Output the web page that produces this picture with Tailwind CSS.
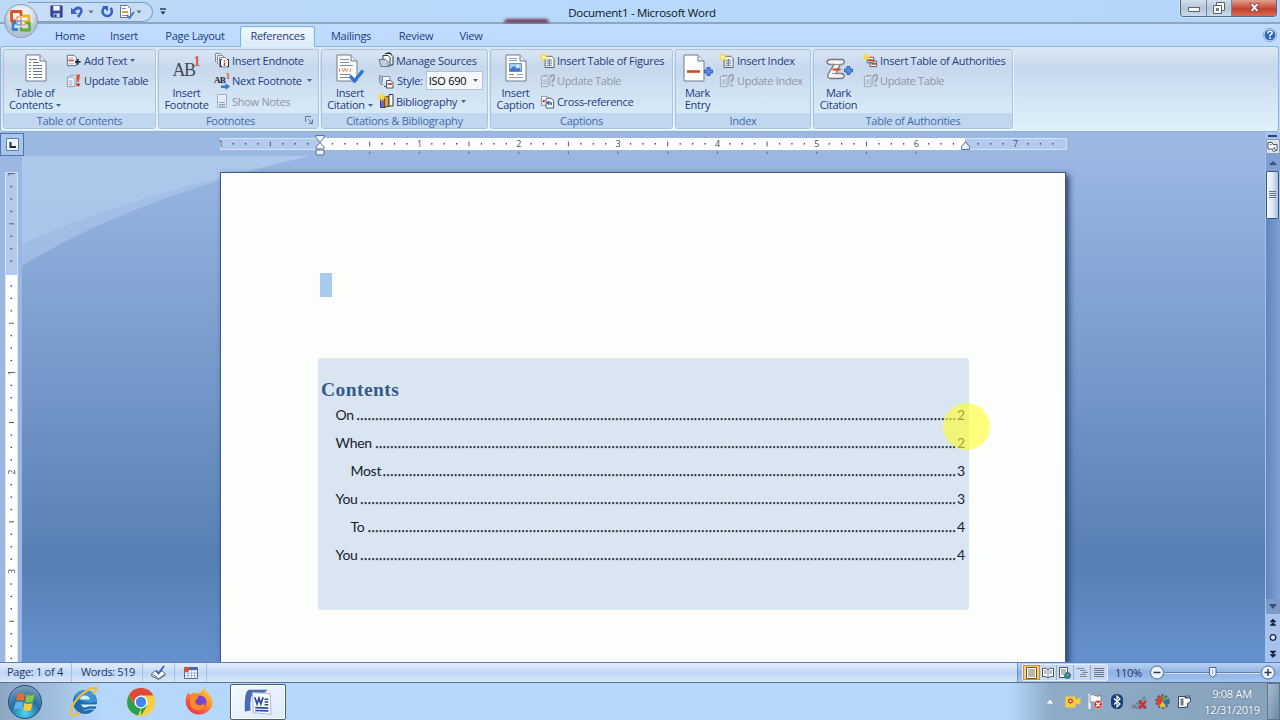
<!DOCTYPE html>
<html lang="en">
<head>
    <meta charset="UTF-8">
    <meta name="viewport" content="width=device-width, initial-scale=1.0">
    <title>Document1 - Microsoft Word</title>
    <script src="https://cdn.jsdelivr.net/npm/@tailwindcss/browser@4"></script>
    <style>
        body {
            font-family: 'Open Sans', 'Noto Sans', sans-serif;
        }
    </style>
</head>
<body class="w-[1280px] h-[720px] overflow-hidden flex flex-col text-[11px] leading-[13px] tracking-[-0.27px] text-[#1c3c80] bg-[#bfdbff]">

    <!-- Icon sprites -->
    <svg class="hidden">
        <symbol id="page" viewBox="0 0 22 28">
            <path d="M1 1h14l6 6v20H1z" fill="#fff" stroke="#707a88"/>
            <path d="M15 1v6h6" fill="#e2e8f0" stroke="#707a88"/>
        </symbol>
        <symbol id="docNew" viewBox="0 0 16 16">
            <path d="M5.500 3.500h7l2.500 2.500v9.500h-9.500z" fill="#fff" stroke="#4c5866"/>
            <path d="M7 7.500h6M7 9.500h6M7 11.500h6M7 13.500h6M10 6v8" stroke="#6c7c94"/>
            <path d="M4 0v9M-.5 4.500h9M1 1.500l6 6M7 1.500l-6 6" stroke="#f5d94a" stroke-width="1.500"/>
            <circle cx="4" cy="4.500" r="1.800" fill="#fff7b0"/>
        </symbol>
        <symbol id="docGrey" viewBox="0 0 16 16">
            <path d="M1.500 3.500h5l2 2v9h-7zM3.500 2.500h5l2 2v9" fill="#dce5f0" stroke="#95a2b3"/>
            <path d="M3 7.500h4M3 9.500h4M3 11.500h4" stroke="#9aa9bf"/>
            <path d="M11 4.500q.5-2.500 2.500-2.500T15.500 4.500Q15 7 13.500 8v2M13.500 12v2.500" fill="none" stroke="#98a3b3" stroke-width="2"/>
        </symbol>
        <symbol id="plus" viewBox="0 0 9 9">
            <path d="M3 .5h3V3h2.500v3H6v2.500H3V6H.5V3H3z" fill="#5b8be8" stroke="#2450b0" stroke-width=".8"/>
        </symbol>
    </svg>

    <!-- Title bar -->
    <header class="relative h-[24px] shrink-0 border-b-2 border-[#8ea6c0] bg-linear-to-r from-[#bcd9f7] via-[#b6d9fc] to-[#b2d5fa] flex items-center text-[#0c1420]">
        <div class="absolute left-[504px] top-[19px] w-[45px] h-[4px] rounded-t-full bg-[#6b3450] blur-[1.5px]"></div>
        <div class="ml-[28px] mt-[1px] w-[125px] h-[20px] border border-[#7d9cc4] border-l-0 rounded-r-full bg-[#c6ddf5] flex items-center pl-[22px]">
            <svg class="w-[13px] h-[13px]" viewBox="0 0 14 14">
                <path d="M1 1h12v12H2l-1-1z" fill="#3b49a8" stroke="#27317f"/>
                <path d="M3.500 1h7v5h-7z" fill="#f1f5ff"/><path d="M4 9h6.500v4H4z" fill="#c9d2ee"/><path d="M5 10h2v3H5z" fill="#27317f"/>
            </svg>
            <svg class="ml-[7px] w-[14px] h-[14px]" viewBox="0 0 14 14">
                <path d="M3 7Q6 2 9.500 3Q13 5 10 9L8 12" fill="none" stroke="#3a63c8" stroke-width="2.600"/>
                <path d="M1 2.500V9h6.500z" fill="#3a63c8"/>
            </svg>
            <svg class="ml-[4px] w-[6px] h-[4px]" viewBox="0 0 6 4"><path d="M.5.5h5L3 3.500z" fill="#5c7191"/></svg>
            <svg class="ml-[7px] w-[13px] h-[13px]" viewBox="0 0 13 13">
                <path d="M3.500 2.500A4.700 4.700 0 1 0 9.500 3" fill="none" stroke="#3560cc" stroke-width="2.500"/>
                <path d="M1 1h6v5.500z" fill="#3560cc"/>
            </svg>
            <svg class="ml-[5px] w-[16px] h-[16px]" viewBox="0 0 16 16">
                <path d="M1.500 1.500h7l3 3v9h-10z" fill="#f9fbff" stroke="#677994"/>
                <path d="M3 4.500h4M3 11.500h6" stroke="#7a90b4"/><path d="M3 8h6" stroke="#e09a50" stroke-width="2"/>
                <path d="M8 11l2.500 3L15 8" fill="none" stroke="#3d75c4" stroke-width="1.800"/>
            </svg>
            <svg class="ml-[1px] w-[6px] h-[4px]" viewBox="0 0 6 4"><path d="M.5.5h5L3 3.500z" fill="#5c7191"/></svg>
        </div>
        <svg class="ml-[7px] w-[6px] h-[7px]" viewBox="0 0 6 7"><path d="M0 1h6" stroke="#1f3558" stroke-width="1.400"/><path d="M.5 3.500h5L3 6.500z" fill="#1f3558"/></svg>
        <h1 class="absolute left-[542px] w-[200px] top-[6px] text-center text-[11.5px] leading-[14px] whitespace-nowrap tracking-[-0.3px]">Document1 - Microsoft Word</h1>
        <div class="absolute right-[3px] top-0 h-[17px] w-[97px] flex border border-t-0 border-[#56697f] rounded-b-[4px] overflow-hidden shadow-[0_0_2px_#fff]">
            <div class="w-[26px] bg-linear-to-b from-[#d3e0ec] via-[#b5c5d6] via-50% to-[#c8dcef] border-r border-[#7387a0] flex justify-center">
                <svg class="mt-[7px] w-[12px] h-[6px]" viewBox="0 0 12 6"><path d="M.5.500h11v4H.5z" fill="#fff" stroke="#56606e"/></svg>
            </div>
            <div class="w-[25px] bg-linear-to-b from-[#d3e0ec] via-[#b5c5d6] via-50% to-[#c8dcef] border-r border-[#7387a0] flex justify-center">
                <svg class="mt-[2px] w-[12px] h-[12px]" viewBox="0 0 12 12"><path d="M3.500.5h8v8h-8z" fill="#fff" stroke="#56606e"/><path d="M.5 3.500h8v8h-8z" fill="#fff" stroke="#56606e"/><path d="M3.500 6.500h2v2h-2z" fill="#b5c5d6" stroke="#56606e"/></svg>
            </div>
            <div class="flex-1 bg-linear-to-b from-[#e0a090] via-[#c4412d] via-55% to-[#d86a4e] flex justify-center">
                <svg class="mt-[3px] w-[11px] h-[9px]" viewBox="0 0 11 9"><path d="M.8.500h3L5.500 2.500 7.200.5h3L7.200 4.500l3 4h-3L5.500 6.500 3.800 8.500h-3l3-4z" fill="#fff" stroke="#6a3238" stroke-width=".7"/></svg>
            </div>
        </div>
    </header>

    <!-- Office button -->
    <svg class="absolute z-20 left-[3px] top-[3px] w-[36px] h-[36px]" viewBox="0 0 36 36">
        <defs><radialGradient id="orb" cx=".5" cy=".35"><stop offset="0" stop-color="#fff"/><stop offset=".65" stop-color="#dfe7f0"/><stop offset="1" stop-color="#b5c2d3"/></radialGradient></defs>
        <circle cx="18" cy="18" r="16.500" fill="url(#orb)" stroke="#8a9bb4"/>
        <g fill="none" stroke-width="2.800" stroke-linejoin="round">
            <path d="M13 18H8.500V8.500H18V13" stroke="#d9531f"/>
            <path d="M19 13h7v6h-4" stroke="#e9b52c"/>
            <path d="M15 26.500h-5V20h3" stroke="#3f7fd0"/>
            <path d="M18 24v3h8.500v-7H23" stroke="#68ac3c"/>
            <path d="M14 14h4v4h-4zM18 18h4v4h-4z" stroke="#f0a060" stroke-width="1.500"/>
            <path d="M14 18h4v4h-4z" stroke="#6a9fe0" stroke-width="1.500"/>
        </g>
    </svg>

    <!-- Tabs -->
    <nav class="relative h-[22px] shrink-0 bg-[#bfdbff]">
        <div class="h-[22px] flex items-end">
            <a class="ml-[43px] w-[54px] h-[19px] text-center pt-[2px]">Home</a>
            <a class="w-[54px] h-[19px] text-center pt-[2px]">Insert</a>
            <a class="w-[88px] h-[19px] text-center pt-[2px] whitespace-nowrap">Page Layout</a>
            <a class="relative z-10 ml-[1px] w-[75px] h-[21px] -mb-[1px] text-center pt-[2px] border border-b-0 border-[#86aee0] rounded-t-[3px] bg-linear-to-b from-[#f3f9ff] to-[#dbe8f8] shadow-[inset_0_0_2px_1px_#d3f4fb]">References</a>
            <a class="ml-[8px] w-[56px] h-[19px] text-center pt-[2px]">Mailings</a>
            <a class="ml-[9px] w-[56px] h-[19px] text-center pt-[2px]">Review</a>
            <a class="w-[54px] h-[19px] text-center pt-[2px]">View</a>
        </div>
        <svg class="absolute right-[3px] top-[4px] w-[14px] h-[14px]" viewBox="0 0 13 13"><circle cx="6.500" cy="6.500" r="5.700" fill="#2f66cc" stroke="#f0f6ff"/><circle cx="6.500" cy="6.500" r="6.200" fill="none" stroke="#6585b8" stroke-width=".6"/><path d="M4.500 5q0-2 2-2t2 1.600q0 1-2 2v1.200M6.500 8.700v1.400" stroke="#fff" stroke-width="1.400" fill="none"/></svg>
    </nav>

    <!-- Ribbon -->
    <section class="h-[86px] shrink-0 border border-[#8fb3df] border-b-[#8db4cb] rounded-[3px] mr-[1px] bg-linear-to-b from-[#dbe7f3] via-[#c7d8ed] via-25% to-[#dff1fa] flex pt-[2px] pl-[2px] gap-[2px]">

        <div class="w-[153px] h-[80px] border border-[#a9c4df] rounded-[3px] shadow-[1px_1px_0_#ebf5fd] flex flex-col">
            <div class="flex-1 flex">
                <div class="w-[62px] flex flex-col items-center text-center leading-[12px] pt-[4px]">
                    <svg class="w-[22px] h-[28px] mb-[5px] ml-[1px]" viewBox="0 0 22 28"><use href="#page"/><path d="M4 5.500h8M4 8.500h2M8 8.500h6M4 11.500h2M8 11.500h9M4 14.500h2M8 14.500h9M4 17.500h2M8 17.500h9M4 20.500h2M8 20.500h9M4 23.500h2M8 23.500h9" stroke="#66788f" stroke-width="1.200"/></svg>
                    <span>Table of</span>
                    <span class="flex items-center gap-[3px]">Contents <svg class="w-[5px] h-[3px]" viewBox="0 0 5 3"><path d="M0 0h5L2.500 3z" fill="#4a6288"/></svg></span>
                </div>
                <div>
                    <div class="h-[20.5px] flex items-center gap-[3px] whitespace-nowrap">
                        <svg class="w-[15px] h-[15px]" viewBox="0 0 16 16"><path d="M1.500 2.500h7l2.500 2.500v8.500h-9.500z" fill="#fff" stroke="#5c6b80"/><path d="M2.500 8h6" stroke="#d65a48" stroke-width="2"/><path d="M3 5.500h5M3 11.500h6" stroke="#9aaac0"/><path d="M9.500 9.500h6M12.500 6.500v6" stroke="#28303c" stroke-width="1.800"/></svg>
                        Add Text <svg class="w-[5px] h-[3px]" viewBox="0 0 5 3"><path d="M0 0h5L2.500 3z" fill="#4a6288"/></svg>
                    </div>
                    <div class="h-[20.5px] flex items-center gap-[3px] whitespace-nowrap tracking-[-0.35px]">
                        <svg class="w-[15px] h-[15px]" viewBox="0 0 16 16"><path d="M1.500 4.500h6l2 2v8h-8zM4 2.500h5l2 2V13" fill="#f2f6fc" stroke="#8493a8"/><path d="M3 8.500h4M3 10.500h4M3 12.500h4" stroke="#94a4ba"/><path d="M11 1.500h4l-1.200 8h-1.600z" fill="#e0552c"/><circle cx="13" cy="12.500" r="1.900" fill="#d43c24"/></svg>
                        Update Table
                    </div>
                </div>
            </div>
            <div class="h-[15px] bg-[#c1d7ef] text-[#3e6aaa] text-center leading-[15px]">Table of Contents</div>
        </div>

        <div class="w-[161px] h-[80px] border border-[#a9c4df] rounded-[3px] shadow-[1px_1px_0_#ebf5fd] flex flex-col">
            <div class="flex-1 flex">
                <div class="w-[55px] flex flex-col items-center text-center leading-[12px] pt-[4px]">
                    <div class="relative w-[28px] h-[28px] mb-[5px] text-[18px] leading-[33px] text-[#454b55] text-left tracking-[-1.6px] font-['Liberation_Serif']">AB<span class="absolute left-[21px] top-[-9px] text-[14px] font-bold text-[#e0583c]">1</span></div>
                    <span>Insert</span>
                    <span>Footnote</span>
                </div>
                <div>
                    <div class="h-[20.5px] flex items-center gap-[2px] whitespace-nowrap">
                        <svg class="w-[16px] h-[16px]" viewBox="0 0 16 16"><path d="M1.500 10V1.500h5l2 2M3.500 12V3.500h5l2 2" fill="#f6f9fd" stroke="#7c8aa0"/><path d="M5.500 5.500h6l3 3v6.500h-9z" fill="#fff" stroke="#7c8aa0"/><path d="M8 7.500H6.500v7H8M13 7.500h1.500v7H13" fill="none" stroke="#28303c"/><path d="M10.500 8v1.500M10.500 10.500V14" stroke="#d43c24" stroke-width="1.600"/></svg>
                        Insert Endnote
                    </div>
                    <div class="h-[20.5px] flex items-center gap-[2px] whitespace-nowrap">
                        <div class="relative w-[16px] h-[16px] text-[9px] leading-[15px] text-[#22283a] tracking-[-0.8px] font-bold font-['Liberation_Serif']">AB<span class="absolute left-[12px] top-[-4px] text-[8px] text-[#e0482c]">1</span>
                            <svg class="absolute left-[7px] top-[10px] w-[9px] h-[7px]" viewBox="0 0 9 7"><path d="M0 2.500h4.500V0L9 3.500 4.500 7V5H0z" fill="#3c78d8"/></svg>
                        </div>
                        Next Footnote <svg class="ml-[3px] w-[5px] h-[3px]" viewBox="0 0 5 3"><path d="M0 0h5L2.500 3z" fill="#4a6288"/></svg>
                    </div>
                    <div class="h-[20.5px] flex items-center gap-[2px] whitespace-nowrap text-[#8e96a0]">
                        <svg class="w-[16px] h-[15px]" viewBox="0 0 16 15"><path d="M3.500.5h9v13h-9z" fill="#e4ecf6" stroke="#a3afc0"/><path d="M5 8.500h6M5 10.500h6M5 12h6" stroke="#8fa0b8"/></svg>
                        Show Notes
                    </div>
                </div>
            </div>
            <div class="relative h-[15px] bg-[#c1d7ef] text-[#3e6aaa] leading-[15px] text-center pr-[16px]">Footnotes
                <svg class="absolute right-[5px] top-[3px] w-[8px] h-[8px]" viewBox="0 0 8 8"><path d="M.5 6V.5H6M3 3l4 4M7.500 3.500v4h-4" fill="none" stroke="#5b7aa8"/></svg>
            </div>
        </div>

        <div class="w-[167px] h-[80px] border border-[#a9c4df] rounded-[3px] shadow-[1px_1px_0_#ebf5fd] flex flex-col">
            <div class="flex-1 flex">
                <div class="w-[56px] flex flex-col items-center text-center leading-[12px] pt-[4px]">
                    <svg class="w-[30px] h-[30px] mb-[3px]" viewBox="0 0 30 30"><use href="#page" x="1" y="0" width="22" height="28"/><path d="M5 5.500h9M5 8.500h9M5 11.500h13M5 20.500h11M5 23.500h9" stroke="#7a8da8"/><path d="M5 14q-1.500 1.500 0 4M7 14.500l1.500 3 1.500-3 1.500 3 1.500-3M15 14q1.500 1.500 0 4" fill="none" stroke="#df8b46"/><path d="M15 22l4.500 5L28 16.500" fill="none" stroke="#2f74ce" stroke-width="3.400"/></svg>
                    <span>Insert</span>
                    <span class="flex items-center gap-[3px]">Citation <svg class="w-[5px] h-[3px]" viewBox="0 0 5 3"><path d="M0 0h5L2.500 3z" fill="#4a6288"/></svg></span>
                </div>
                <div>
                    <div class="h-[20.5px] flex items-center gap-[2px] whitespace-nowrap">
                        <svg class="w-[16px] h-[16px]" viewBox="0 0 16 16"><path d="M7 1.500h5l3 3V13h-3" fill="#e8edf4" stroke="#303844"/><path d="M5 3.500h5l2 2V14H5z" fill="#fff" stroke="#303844"/><path d="M1 7.500h7l2 2v5H3z" fill="#c2cedd" stroke="#6a788c"/><path d="M7 2l4-1.500 3 2" stroke="#303844" fill="none"/></svg>
                        Manage Sources
                    </div>
                    <div class="h-[20.5px] flex items-center gap-[3px] whitespace-nowrap">
                        <svg class="w-[16px] h-[16px]" viewBox="0 0 16 16"><path d="M3 11.500V2.500H1.500v6L3 11.500h2M4.500 9V3.500H12v4" fill="#f1f5fa" stroke="#7c8aa0"/><path d="M8.500 7.500h4l2.500 2v5.500H8.500z" fill="#fff" stroke="#49566a"/><path d="M9.500 11h4.500" stroke="#d8432c" stroke-width="1.800"/><path d="M6 13.500h3" stroke="#49566a"/></svg>
                        Style:
                        <div class="w-[57px] h-[19px] border border-[#abc1de] bg-[#f4f8fd] text-black flex items-center justify-between pl-[2px] pr-[4px]">ISO 690 <svg class="w-[5px] h-[3px]" viewBox="0 0 5 3"><path d="M0 0h5L2.500 3z" fill="#4a6288"/></svg></div>
                    </div>
                    <div class="h-[20.5px] flex items-center gap-[2px] whitespace-nowrap">
                        <svg class="w-[16px] h-[16px]" viewBox="0 0 16 16"><path d="M2.500 5.500h5v9h-5z" fill="#7b66c8" stroke="#44386e"/><path d="M6.500 3.500h4.500v10H6.500z" fill="#dfa33c" stroke="#69511f"/><path d="M11 1.500h4V13h-4z" fill="#f5f7fa" stroke="#303844"/><path d="M3.500 0v8M0 4h7.500M1 1.500l5 5M6 1.500l-5 5" stroke="#f5d94a" stroke-width="1.500"/></svg>
                        Bibliography <svg class="ml-[2px] w-[5px] h-[3px]" viewBox="0 0 5 3"><path d="M0 0h5L2.500 3z" fill="#4a6288"/></svg>
                    </div>
                </div>
            </div>
            <div class="h-[15px] bg-[#c1d7ef] text-[#3e6aaa] text-center leading-[15px]">Citations &amp; Bibliography</div>
        </div>

        <div class="w-[183px] h-[80px] border border-[#a9c4df] rounded-[3px] shadow-[1px_1px_0_#ebf5fd] flex flex-col">
            <div class="flex-1 flex">
                <div class="w-[49px] flex flex-col items-center text-center leading-[12px] pt-[4px]">
                    <svg class="w-[22px] h-[28px] mb-[5px] ml-[1px]" viewBox="0 0 22 28"><use href="#page"/><path d="M4 4.500h8M4 6.500h8M4 20.500h5M12 20.500h6M4 23.500h14" stroke="#8d9db5"/><path d="M4.500 9.500h12v8h-12z" fill="#a7cbf4" stroke="#6d8fc0"/><path d="M5 17v-2l4-3 3 3 2-1.500 2 3.500z" fill="#4176c4"/><circle cx="13" cy="12" r="1.200" fill="#fff"/><path d="M4 20.500h5" stroke="#da6d54"/></svg>
                    <span>Insert</span>
                    <span>Caption</span>
                </div>
                <div>
                    <div class="h-[20.5px] flex items-center gap-[2px] whitespace-nowrap">
                        <svg class="w-[15px] h-[15px] overflow-visible"><use href="#docNew"/></svg>
                        Insert Table of Figures
                    </div>
                    <div class="h-[20.5px] flex items-center gap-[2px] whitespace-nowrap tracking-[-0.35px] text-[#8e96a0]">
                        <svg class="w-[15px] h-[15px]"><use href="#docGrey"/></svg>
                        Update Table
                    </div>
                    <div class="h-[20.5px] flex items-center gap-[2px] whitespace-nowrap tracking-[-0.35px]">
                        <svg class="w-[15px] h-[15px]" viewBox="0 0 16 16"><path d="M1.500 2.500h6l2 2V12h-8z" fill="#fff" stroke="#7c8aa0"/><path d="M6.500 4.500h5.500l2.500 2.500v8h-8z" fill="#fff" stroke="#49566a"/><path d="M2.500 7.500h3M4 6v3" stroke="#d8432c" stroke-width="1.700"/><path d="M12 12V9.500H8M10 7.500l-2.500 2 2.500 2" fill="none" stroke="#2d63bd" stroke-width="1.500"/></svg>
                        Cross-reference
                    </div>
                </div>
            </div>
            <div class="h-[15px] bg-[#c1d7ef] text-[#3e6aaa] text-center leading-[15px]">Captions</div>
        </div>

        <div class="w-[136px] h-[80px] border border-[#a9c4df] rounded-[3px] shadow-[1px_1px_0_#ebf5fd] flex flex-col">
            <div class="flex-1 flex">
                <div class="w-[43px] flex flex-col items-center text-center leading-[12px] pt-[4px]">
                    <svg class="w-[30px] h-[28px] mb-[5px] ml-[1px]" viewBox="0 0 30 28"><use href="#page" width="22" height="28"/><path d="M4 17.500h13" stroke="#d44a22" stroke-width="2.600"/><use href="#plus" x="21" y="13" width="9" height="9"/></svg>
                    <span>Mark</span>
                    <span>Entry</span>
                </div>
                <div>
                    <div class="h-[20.5px] flex items-center gap-[3px] whitespace-nowrap">
                        <svg class="w-[15px] h-[15px] overflow-visible"><use href="#docNew"/></svg>
                        Insert Index
                    </div>
                    <div class="h-[20.5px] flex items-center gap-[3px] whitespace-nowrap text-[#8e96a0]">
                        <svg class="w-[15px] h-[15px]"><use href="#docGrey"/></svg>
                        Update Index
                    </div>
                </div>
            </div>
            <div class="h-[15px] bg-[#c1d7ef] text-[#3e6aaa] text-center leading-[15px]">Index</div>
        </div>

        <div class="w-[200px] h-[80px] border border-[#a9c4df] rounded-[3px] shadow-[1px_1px_0_#ebf5fd] flex flex-col">
            <div class="flex-1 flex">
                <div class="w-[49px] flex flex-col items-center text-center leading-[12px] pt-[4px]">
                    <svg class="w-[30px] h-[28px] mb-[5px]" viewBox="0 0 30 28"><path d="M6 5.500h13q3 3-1 5h-2l-4 9h5q3 0 3 2.500t-3 2.500H6q-3-1-2-4l6-10H6q-3-.5-3-2.500t3-2.500z" fill="#f7f4ef" stroke="#6f7680" stroke-width="1.300"/><path d="M6 10.500h12M8 19.500h9" stroke="#8a9098"/><path d="M8.500 15.500h8" stroke="#d44a22" stroke-width="2.200"/><use href="#plus" x="20" y="12" width="9" height="9"/></svg>
                    <span>Mark</span>
                    <span>Citation</span>
                </div>
                <div>
                    <div class="h-[20.5px] flex items-center gap-[2px] whitespace-nowrap">
                        <svg class="w-[15px] h-[15px] overflow-visible" viewBox="0 0 16 16"><path d="M4.500 4.500h7v6h-7zM7.500 8.500h7v6h-7z" fill="#fff" stroke="#4c5866"/><path d="M5 7.500h6M9 11.500h5" stroke="#d8432c" stroke-width="1.800"/><path d="M3.500 0v8M-.5 4h8M1 1.500l5 5M6 1.500l-5 5" stroke="#f5d94a" stroke-width="1.400"/></svg>
                        Insert Table of Authorities
                    </div>
                    <div class="h-[20.5px] flex items-center gap-[2px] whitespace-nowrap tracking-[-0.35px] text-[#8e96a0]">
                        <svg class="w-[15px] h-[15px]"><use href="#docGrey"/></svg>
                        Update Table
                    </div>
                </div>
            </div>
            <div class="h-[15px] bg-[#c1d7ef] text-[#3e6aaa] text-center leading-[15px]">Table of Authorities</div>
        </div>
    </section>

    <!-- Workspace -->
    <main class="relative flex-1 min-h-0 flex bg-[#9ab8e1]">
        <div class="w-[22px] shrink-0 flex flex-col">
            <div class="w-[24px] h-[23px] border border-[#4e74b4] bg-[#aac5ea] flex items-center justify-center mt-[1px]">
                <svg class="w-[13px] h-[13px]" viewBox="0 0 13 13"><path d="M.5.500h12v12H.5z" fill="#edf4fd" stroke="#5d7eb0"/><path d="M4.500 4v5H10" fill="none" stroke="#1b2d50" stroke-width="2"/></svg>
            </div>
            <svg id="vRuler" class="w-[22px] h-[506px]"></svg>
        </div>

        <div class="flex-1 min-w-0 flex flex-col">
            <svg id="hRuler" class="w-[1243px] h-[24px] shrink-0"></svg>
            <div class="relative flex-1 min-h-0 overflow-hidden bg-linear-to-b from-[#9ab7e3] via-[#5680b4] via-80% to-[#6591cf] flex">
                <svg class="absolute left-0 top-0 w-[300px] h-[112px]" viewBox="0 0 300 112">
                    <path d="M0 0H288Q110 42 0 110z" fill="#b4cdee" opacity=".5"/>
                    <path d="M0 0H288Q110 38 0 88z" fill="#b4d0f0" opacity=".45"/>
                </svg>
                <!-- Document page -->
                <article class="relative ml-[198px] mt-[16px] w-[846px] h-[520px] shrink-0 border border-[#44597a] bg-[#fcfefc] shadow-[3px_3px_6px_#27426f] text-[#16202c]">
                    <div class="mt-[100px] ml-[99px] w-[12px] h-[24px] bg-[#a8caee]"></div>
                    <div class="mt-[61px] ml-[97px] w-[651px] h-[252px] rounded-[3px] bg-[#d9e6f2] pt-[20px] pl-[3px] pr-[4px]">
                        <h2 class="text-[19.5px] leading-[24px] font-bold text-[#33598f] font-['Liberation_Serif'] tracking-[0.45px]">Contents</h2>
                        <ol id="toc" class="-mt-[1px] text-[14px] leading-[27px] font-['Lato','Open_Sans',sans-serif] tracking-[-0.1px]"></ol>
                    </div>
                </article>
            </div>
        </div>

        <!-- Scroll bar -->
        <div class="w-[15px] shrink-0 flex flex-col items-center bg-[#a6c3ee]">
            <div class="mt-[3px] w-[9px] h-[2px] bg-[#24457c]"></div>
            <div class="mt-[2px] w-[14px] h-[15px] border border-[#8c9cb4] bg-[#dbe3ee] flex items-center justify-center">
                <svg class="w-[11px] h-[11px]" viewBox="0 0 11 11"><path d="M1 1.500h4l1 2h4v6H7L5.500 8H1z" fill="#fff" stroke="#4a5566"/><path d="M3 3.500h1.500M7 6.500h1" stroke="#4a5566"/><circle cx="7" cy="9" r="1.500" fill="#fff" stroke="#4a5566" stroke-width=".8"/></svg>
            </div>
            <div class="w-[14px] h-[17px] bg-[#7f9fd0] flex items-center justify-center"><svg class="w-[8px] h-[4px]" viewBox="0 0 8 4"><path d="M0 4l4-4 4 4z" fill="#33507f"/></svg></div>
            <div class="w-[13px] h-[48px] shrink-0 border border-[#3c5683] rounded-[1px] bg-linear-to-r from-[#f6faff] via-[#dfe8f5] to-[#a9bedb] flex items-center justify-center">
                <svg class="w-[7px] h-[8px]" viewBox="0 0 7 8"><path d="M0 .5h7M0 2.500h7M0 4.500h7M0 6.500h7" stroke="#5e7496"/></svg>
            </div>
            <div class="w-[14px] flex-1 bg-linear-to-r from-[#6185bd] to-[#7fa0d2]"></div>
            <div class="w-[14px] h-[15px] bg-[#7c9bc9] flex items-center justify-center"><svg class="w-[8px] h-[5px]" viewBox="0 0 8 5"><path d="M0 0h8L4 5z" fill="#33507f"/></svg></div>
            <svg class="w-[14px] h-[48px] shrink-0" viewBox="0 0 14 48">
                <path d="M4 8l3-3 3 3zM4 11.500l3-3 3 3zM4 37l3 3 3-3zM4 40.500l3 3 3-3z" fill="#101a2c" stroke="#101a2c" stroke-width=".5"/>
                <circle cx="7" cy="23.500" r="2.800" fill="#dbe6f4" stroke="#1c2c48" stroke-width="1.300"/>
            </svg>
        </div>
    </main>

    <!-- Status bar -->
    <footer class="h-[21px] shrink-0 border-y border-t-[#5a7eb8] border-b-[#5b718f] bg-linear-to-b from-[#e2edfb] via-[#c0d6f4] via-55% to-[#dbe9fb] flex items-center text-[#1a356e]">
        <div class="w-[72px] h-full pl-[7px] pt-[2px] border-r border-[#a3bfe4] whitespace-nowrap">Page: 1 of 4</div>
        <div class="w-[71px] h-full pl-[9px] pt-[2px] border-r border-[#a3bfe4] whitespace-nowrap tracking-[-0.4px]">Words: 519</div>
        <div class="w-[32px] h-full border-r border-[#a3bfe4] flex items-center justify-center">
            <svg class="w-[15px] h-[15px]" viewBox="0 0 15 15"><path d="M.5 8.500l4-2.500 3 2 3.500-2 3.500 3-7 4.500z" fill="#fff" stroke="#5a6c88"/><path d="M.5 9.500v1.500l7 3.500 7-4.500" fill="none" stroke="#5a6c88"/><path d="M5 5.500l2.500 3L13 1" fill="none" stroke="#365fb0" stroke-width="1.800"/></svg>
        </div>
        <div class="w-[32px] h-full border-r border-[#a3bfe4] flex items-center justify-center">
            <svg class="w-[15px] h-[13px]" viewBox="0 0 15 13"><path d="M1.500 1.500h13v11h-13z" fill="#fff" stroke="#506c9c"/><path d="M2 3h12" stroke="#3e68b0" stroke-width="2.400"/><path d="M2 7h12M2 9.700h12M5 5v7M8.500 5v7M11.500 5v7" stroke="#93a7c7" stroke-width=".8"/><circle cx="3.500" cy="3.500" r="2.700" fill="#d9522f"/></svg>
        </div>
        <div class="flex-1 h-full"></div>
        <div class="w-[263px] h-full border-l border-[#6d90c6] bg-linear-to-b from-[#b9d2f5] via-[#8fb2e4] via-50% to-[#a5c4f0] flex items-center">
            <div class="ml-[4px] h-[17px] flex border border-[#e5eefa] bg-[#c8daf2] rounded-[2px]">
                <div class="w-[17px] border border-[#c58d3c] bg-[#fbce74] flex items-center justify-center"><svg class="w-[11px] h-[12px]" viewBox="0 0 11 12"><path d="M.5.500h10v11H.5z" fill="#fff" stroke="#6a5a3c"/><path d="M2 3h7M2 5h7M2 7h7M2 9h7" stroke="#7a6f5a"/></svg></div>
                <div class="w-[17px] border-r border-[#94aed4] flex items-center justify-center"><svg class="w-[12px] h-[12px]" viewBox="0 0 12 12"><path d="M.5 1.500Q4 .5 6 2.500 8 .5 11.500 1.500v8Q8 9 6 11 4 9 .5 9.500z" fill="#fff" stroke="#49566a"/><path d="M6 2v9M2 4h2.500M2 6h2.500M7.500 4H10M7.500 6H10" stroke="#6a788c"/></svg></div>
                <div class="w-[17px] border-r border-[#94aed4] flex items-center justify-center"><svg class="w-[12px] h-[12px]" viewBox="0 0 12 12"><path d="M.5.500h8v10h-8z" fill="#fff" stroke="#49566a"/><path d="M2 3h5M2 5h5M2 7h3" stroke="#6a788c"/><circle cx="8.500" cy="8.500" r="3" fill="#3f7fbc" stroke="#2e6a58"/><path d="M7 8l2-1 1 2z" fill="#62b858"/></svg></div>
                <div class="w-[17px] border-r border-[#94aed4] flex items-center justify-center"><svg class="w-[11px] h-[10px]" viewBox="0 0 11 10"><path d="M0 .5h7M3 2.500h6M5 4.500h6M3 6.500h6M3 8.500h7" stroke="#7c899c"/></svg></div>
                <div class="w-[16px] flex items-center justify-center"><svg class="w-[10px] h-[10px]" viewBox="0 0 10 10"><path d="M0 .5h10M0 2.500h10M0 4.500h10M0 6.500h10M0 8.500h10" stroke="#6a778a"/></svg></div>
            </div>
            <div class="w-[42px] pl-[7px]">110%</div>
            <svg class="w-[126px] h-[17px]" viewBox="0 0 126 17">
                <path d="M15 8.500h95" stroke="#5f7fac"/><path d="M15 9.500h95" stroke="#d5e4f8"/>
                <g fill="#edf4fd" stroke="#51698f"><circle cx="7" cy="8.500" r="6.500"/><circle cx="118" cy="8.500" r="6.500"/></g>
                <path d="M3.500 8.500h7M114.500 8.500h7M118 5v7" stroke="#2c3e5e" stroke-width="1.500"/>
                <path d="M59.500 3.500H66v7L62.700 13.500 59.500 10.500z" fill="#eef4fc" stroke="#4d668f"/><path d="M62.700 5.500v5" stroke="#8da3c3"/>
            </svg>
        </div>
    </footer>

    <!-- Taskbar -->
    <div class="h-[37px] shrink-0 bg-linear-to-r from-[#8ba6c2] from-0% via-[#b5d7fa] via-8% to-[#b5d7fa] flex items-center">
        <svg class="ml-[7px] w-[36px] h-[36px]" viewBox="0 0 36 36">
            <defs><radialGradient id="start" cx=".5" cy=".85" r=".9"><stop offset="0" stop-color="#4fd3f0"/><stop offset=".5" stop-color="#2371a8"/><stop offset="1" stop-color="#8fa9bd"/></radialGradient></defs>
            <circle cx="18" cy="18" r="16.500" fill="url(#start)" stroke="#2c4d6e"/>
            <path d="M10.500 10Q14 8 18 10l-1.500 7Q13 15 9 17z" fill="#ec6a2c"/><path d="M19.500 10.500q4 2 8 0l-1.500 7q-4 2-8 0z" fill="#8cc63e"/>
            <path d="M8.500 18.500q4-2 7.500 0l-1.500 7q-4-2-7.500 0z" fill="#5fb4ee"/><path d="M17.500 19q4 2 8 0L24 26q-4 2-8 0z" fill="#fbcb3a"/>
        </svg>
        <svg class="ml-[25px] w-[32px] h-[32px]" viewBox="0 0 32 32">
            <circle cx="17" cy="16" r="12" fill="#1c6cae"/>
            <path d="M17 4a12 12 0 0 1 12 12l-8 1-14-5q2-8 10-8z" fill="#3d94d2"/>
            <path d="M12 13.500q1-4 5-4t5 4zM12 18.500h17q-.5 3-2 5h-6q-2 1-4 1-4.500-.5-5-6z" fill="#d8effc"/>
            <path d="M12 18.500q1 5 6 4l3.500-1H28" fill="none" stroke="#1c6cae" stroke-width="2.500"/>
            <path d="M25 8Q31 1 27 2 22 1 12 10 2 20 3 28q2 3 9-1" fill="none" stroke="#efbd3a" stroke-width="2.200"/>
        </svg>
        <svg class="ml-[27px] w-[28px] h-[28px]" viewBox="0 0 28 28">
            <circle cx="14" cy="14" r="14" fill="#fbcd42"/>
            <path d="M1.900 7L8 17.500l6 3L14 28A14 14 0 0 1 1.900 7zM14 28l6.500-10.500-6.500 3-3 7z" fill="#2ba04e"/><path d="M14 28l6.500-10.500H27.500A14 14 0 0 1 14 28z" fill="#fbcd42"/>
            <path d="M1.900 7L8 17 8.500 10 14 7.500h12.500A14 14 0 0 0 1.900 7z" fill="#dc4a3d"/>
            <circle cx="14" cy="14" r="6.500" fill="#fff"/><circle cx="14" cy="14" r="5.200" fill="#4486f0"/>
        </svg>
        <svg class="ml-[29px] w-[30px] h-[30px]" viewBox="0 0 30 30">
            <defs><linearGradient id="fox" x1="1" x2=".2" y1="0" y2="1"><stop offset="0" stop-color="#ffe04a"/><stop offset=".45" stop-color="#ff9130"/><stop offset="1" stop-color="#ec2652"/></linearGradient></defs>
            <path d="M20 .5q1 3 4 5.500 5 5 4.500 11A13.500 13.500 0 1 1 2 11q1-4 3-6 0 2 1 3 4-3 7-2 5 0 7-5.500z" fill="url(#fox)"/>
            <circle cx="16" cy="15" r="6.500" fill="#7a46cc"/><path d="M7 9q5-2 7 0 1 2-2 3.500Q10 17 14 18q4 1 6-2 2 5-4 7-9 1-10-7z" fill="#ff8a28"/>
        </svg>
        <div class="ml-[16px] w-[56px] h-[36px] border border-[#4e6078] rounded-[2px] bg-linear-to-br from-[#f4f9ff] to-[#dceafa] shadow-[inset_0_0_0_1px_#fff] flex items-center justify-center">
            <svg class="w-[30px] h-[30px]" viewBox="0 0 32 30">
                <path d="M2 25Q1 4 6 2h20l-3 3H11Q7 10 8 24z" fill="#4a6cb4"/>
                <path d="M10 5l19 1 1 22-19-1.500z" fill="#fafcff" stroke="#a5b6d6"/>
                <path d="M12.500 10l2.500 7 2-6 2 6 2.500-7" fill="none" stroke="#2c4a9c" stroke-width="1.800"/>
                <path d="M23 12h4M23 15h4M23 18h4M13 21l14 .5M13 24l14 .5" stroke="#2c4a9c" stroke-width="1.700"/>
            </svg>
        </div>
        <div class="flex-1"></div>
        <!-- System tray -->
        <div class="w-[270px] h-full bg-linear-to-r from-[#b5d7fa] from-0% via-[#8fabc7] via-15% to-[#86a2bd] flex items-center text-white">
            <svg class="ml-[36px] w-[8px] h-[5px]" viewBox="0 0 8 5"><path d="M0 5l4-5 4 5z" fill="#f4f9ff" stroke="#5a7390" stroke-width=".4"/></svg>
            <svg class="ml-[11px] w-[16px] h-[12px]" viewBox="0 0 16 12"><path d="M.5.500h10v3l5-2v7l-5-1v4H.5z" fill="#f7cf3c"/><circle cx="5.500" cy="5" r="2.500" fill="#e23a2a"/><circle cx="5.500" cy="5" r="1" fill="#fff"/></svg>
            <svg class="ml-[7px] w-[15px] h-[15px]" viewBox="0 0 15 15"><path d="M1.500 0v15" stroke="#fff" stroke-width="2"/><path d="M2 1q3-1 5 .5t6 0v7q-4 1-6 0T2 8z" fill="#fff" stroke="#56697f" stroke-width=".7"/><circle cx="10" cy="10.500" r="4.300" fill="#d8322c" stroke="#fff" stroke-width=".5"/><path d="M8 8.500l4 4M12 8.500l-4 4" stroke="#fff" stroke-width="1.400"/></svg>
            <svg class="ml-[8px] w-[12px] h-[15px]" viewBox="0 0 12 15"><rect width="12" height="15" rx="5.500" fill="#173f78"/><path d="M3 4.500l6 5.500-3 2.800V2.200L9 5l-6 5.500" fill="none" stroke="#fff" stroke-width="1.200"/></svg>
            <svg class="ml-[9px] w-[16px] h-[14px]" viewBox="0 0 16 14"><path d="M.5 10.500h2V13h-2zM4 8h2v5H4zM7.500 5.500h2V13h-2zM11 2.500h2V13h-2z" fill="#b9c6d5" stroke="#4c5b70" stroke-width=".8"/><path d="M7 6l7 7.500M14 6l-7 7.500" stroke="#d62828" stroke-width="2"/></svg>
            <svg class="ml-[7px] w-[15px] h-[15px]" viewBox="0 0 15 15"><circle cx="7.500" cy="7.500" r="6" fill="none" stroke="#4b5966" stroke-width="2.500" stroke-dasharray="2.200 1.570"/><path d="M7.500 7.500V2a5.500 5.500 0 0 1 5.200 3.700z" fill="#53a838"/><path d="M7.500 7.500l5.200-1.800A5.500 5.500 0 0 1 11 12z" fill="#2d68c8"/><path d="M7.500 7.500L11 12a5.500 5.500 0 0 1-7 0z" fill="#e6c02e"/><path d="M7.500 7.500L4 12A5.500 5.500 0 0 1 7.500 2z" fill="#dc4130"/></svg>
            <svg class="ml-[7px] w-[15px] h-[15px]" viewBox="0 0 15 15"><path d="M1.500 2.500h7v11h-7z" fill="#fff" stroke="#38485c"/><path d="M3.500 4.500h3v7h-3z" fill="#6c7c90"/><path d="M9 1v3M12 1v3M7.500 4h6v3.500l-3 2V13H8" fill="#fff" stroke="#38485c"/></svg>
            <div class="ml-auto w-[60px] text-center leading-[16px] whitespace-nowrap [text-shadow:0_0_2px_#42586f]">9:08 AM<br>12/31/2019</div>
            <div class="ml-[5px] w-[13px] h-full border border-[#5d7690] bg-linear-to-br from-[#a8bdd0] to-[#6f8aa6]"></div>
        </div>
    </div>

    <!-- Pointer highlight -->
    <div class="absolute left-[943px] top-[403px] w-[47px] h-[47px] rounded-full bg-[#ffff28]/60"></div>

    <script>
        const entries = [
            { title: 'On', page: 2, sub: false, dots: 160 },
            { title: 'When', page: 2, sub: false, dots: 155 },
            { title: 'Most', page: 3, sub: true, dots: 153 },
            { title: 'You', page: 3, sub: false, dots: 159 },
            { title: 'To', page: 4, sub: true, dots: 157 },
            { title: 'You', page: 4, sub: false, dots: 159 },
        ];

        document.getElementById('toc').innerHTML = entries.map(entry => `
            <li class="flex justify-between h-[28.1px] ${entry.sub ? 'pl-[29.5px]' : 'pl-[14.5px]'}">
                <span class="tracking-[-0.3px]">${entry.title}</span>
                <span class="ml-auto mr-[1px] whitespace-nowrap font-['Open_Sans'] text-[14px] tracking-[0.07px] [-webkit-text-stroke:0.3px_#16202c]">${'.'.repeat(entry.dots)}</span>
                <span>${entry.page}</span>
            </li>
        `).join('');

        const INCH = 99.35;

        // Horizontal ruler, x is relative to the left edge of the workspace
        const drawHorizontal = () => {
            const zero = 298;
            let out = '<rect x="198.5" y="6.500" width="846" height="11" fill="#b2cbed" stroke="#d3e4fa"/><rect x="298" y="6" width="645" height="12" fill="#fff"/>';
            for (let i = -8; i <= 59; i++) {
                const x = zero + i * INCH / 8;
                if (i === 0) continue;
                if (i % 8 === 0) {
                    out += `<text x="${x}" y="15" text-anchor="middle" font-size="9" fill="#3d4c66">${Math.abs(i / 8)}</text>`;
                } else if (i % 4 === 0) {
                    out += `<path d="M${x} 9.500v5" stroke="#4d5c78"/>`;
                } else {
                    out += `<rect x="${x - .6}" y="11" width="1.300" height="1.600" fill="#3d4c66"/>`;
                }
                if (i > 0 && i % 4 === 0 && i < 52) out += `<path d="M${x} 19.500v2.500" stroke="#56709c"/>`;
            }
            out += '<g fill="#eef4fc" stroke="#5a7096"><path d="M294 3.500h8v2l-4 5-4-5zM294 17v-2l4-4.500 4 4.500v2zM294 18h8v5h-8z"/><path d="M939.500 17.500v-3l4-4.500 4 4.500v3z"/></g>';
            document.getElementById('hRuler').innerHTML = out;
        };

        // Vertical ruler, zero sits at the top text margin
        const drawVertical = () => {
            const zero = 117.5;
            let out = '<rect x="5.500" y="16.500" width="12" height="500" fill="#b2cbed" stroke="#d3e4fa"/><rect x="6" y="119" width="11" height="400" fill="#fff"/>';
            for (let i = -8; i <= 31; i++) {
                const y = zero + i * INCH / 8;
                if (i === 0) continue;
                if (i % 8 === 0) {
                    out += `<text transform="translate(15 ${y}) rotate(-90)" text-anchor="middle" font-size="9" fill="#3d4c66">${Math.abs(i / 8)}</text>`;
                } else if (i % 4 === 0) {
                    out += `<path d="M9 ${y}h5" stroke="#4d5c78"/>`;
                } else {
                    out += `<rect x="10.500" y="${y - .6}" width="1.600" height="1.300" fill="#3d4c66"/>`;
                }
            }
            document.getElementById('vRuler').innerHTML = out;
        };

        drawHorizontal();
        drawVertical();
    </script>
</body>
</html>
